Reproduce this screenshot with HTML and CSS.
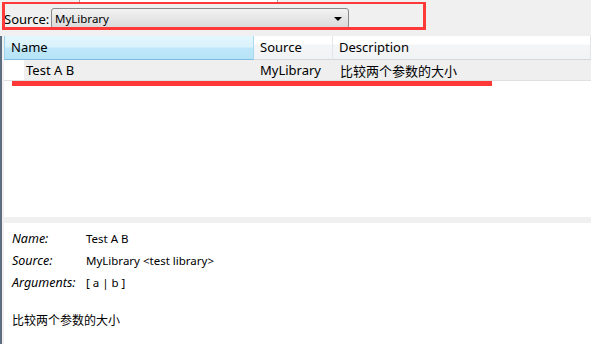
FILE: index.html
```html
<!DOCTYPE html>
<html lang="en">
<head>
    <meta charset="UTF-8">
    <meta name="viewport" content="width=device-width, initial-scale=1.0">
    <title>Keyword Browser</title>
    <link rel="stylesheet" href="styles.css">
</head>
<body>
    <div class="top-strip">
        <div class="top-tab"></div>
    </div>

    <div class="toolbar">
        <span class="source-label">Source:</span>
        <div class="combo">
            <span class="combo-text">MyLibrary</span>
            <span class="combo-arrow"></span>
        </div>
    </div>

    <div class="main">
        <div class="list">
            <div class="list-header">
                <div class="head-cell selected">Name</div>
                <div class="head-cell">Source</div>
                <div class="head-cell">Description</div>
            </div>
            <div class="list-row">
                <div class="cell name-cell">Test A B</div>
                <div class="cell">MyLibrary</div>
                <div class="cell">比较两个参数的大小</div>
            </div>
        </div>

        <div class="splitter"></div>

        <div class="details">
            <div class="detail-grid">
                <span class="detail-label">Name:</span>
                <span>Test A B</span>
                <span class="detail-label">Source:</span>
                <span>MyLibrary &lt;test library&gt;</span>
                <span class="detail-label">Arguments:</span>
                <span>[ a | b ]</span>
            </div>
            <p class="doc">比较两个参数的大小</p>
        </div>
    </div>

    <!-- red annotations drawn over the screenshot -->
    <div class="mark mark-box"></div>
    <div class="mark mark-line"></div>
</body>
</html>
```

FILE: styles.css
```css
body {
    margin: 0;
    width: 591px;
    height: 344px;
    overflow: hidden;
    background-color: #f0f0f0;
    font-family: "Noto Sans", "Noto Sans CJK SC", sans-serif;
    color: #000;
    position: relative;
}

.top-strip {
    height: 3px;
    padding-left: 79px;
}

.top-tab {
    width: 197px;
    height: 2px;
    background-color: #fff;
    border: 1px solid #a0a0a0;
    border-top: none;
}

.toolbar {
    display: flex;
    align-items: center;
    height: 33px;
    padding-left: 4px;
    box-sizing: border-box;
    padding-bottom: 2px;
}

.source-label {
    font-size: 13px;
    width: 47px;
}

.combo {
    display: flex;
    align-items: center;
    justify-content: space-between;
    width: 298px;
    height: 21px;
    box-sizing: border-box;
    padding: 0 3px 0 3px;
    border: 1px solid #8a8a8a;
    border-radius: 3px;
    background: linear-gradient(#f3f3f3, #e6e6e6 50%, #dadada);
    font-size: 11.5px;
}

.combo-arrow {
    width: 0;
    height: 0;
    border-left: 4px solid transparent;
    border-right: 4px solid transparent;
    border-top: 4px solid #000;
    margin-right: 3px;
}

.main {
    border-left: 2px solid #5c6e80;
    padding-left: 2px;
    height: 308px;
    display: flex;
    flex-direction: column;
}

.list {
    height: 181px;
    background-color: #fff;
}

.list-header,
.list-row {
    display: grid;
    grid-template-columns: 250px 79px 1fr;
}

.list-header {
    height: 24px;
    font-size: 13px;
}

.head-cell {
    display: flex;
    align-items: center;
    padding-left: 6px;
    padding-bottom: 1px;
    background: linear-gradient(#fff 0, #fff 8px, #f4f5f7 9px, #f2f3f5);
    border-right: 1px solid #e3e5e8;
    border-bottom: 1px solid #d5d7da;
}

.head-cell.selected {
    padding-left: 6px;
    background: linear-gradient(#e3f6fd 0, #d9f2fc 11px, #bee8f9 12px, #b6e3f7);
    border-left: 1px solid #9fd3ee;
    border-right: 1px solid #a9d9f0;
    border-bottom: 1px solid #7fbde0;
}

.list-row {
    height: 21px;
    font-size: 13px;
    background-color: #efefef;
    border-bottom: 1px solid #e0e0e0;
    box-sizing: border-box;
}

.cell {
    display: flex;
    align-items: center;
    padding-left: 6px;
}

.cell:last-child {
    padding-left: 7px;
}

.name-cell {
    padding-left: 22px;
    background: linear-gradient(to right, #fff 20px, #efefef 20px);
}

.splitter {
    height: 6px;
    background-color: #f0f0f0;
}

.details {
    flex: 1;
    background-color: #fff;
    padding: 4px 0 0 8px;
    font-size: 11.5px;
}

.detail-grid {
    display: grid;
    grid-template-columns: 74px 1fr;
    grid-auto-rows: 22px;
    align-items: center;
}

.detail-label {
    font-style: italic;
    font-size: 12.5px;
}

.doc {
    margin: 17px 0 0;
    font-size: 12px;
    line-height: 22px;
}

.mark {
    position: absolute;
    box-sizing: border-box;
}

.mark-box {
    left: 2px;
    top: 2px;
    width: 424px;
    height: 28px;
    border: 3px solid #ff3838;
    border-top-width: 2px;
}

.mark-line {
    left: 12px;
    top: 81px;
    width: 480px;
    height: 5px;
    background-color: #ff3838;
}
```
